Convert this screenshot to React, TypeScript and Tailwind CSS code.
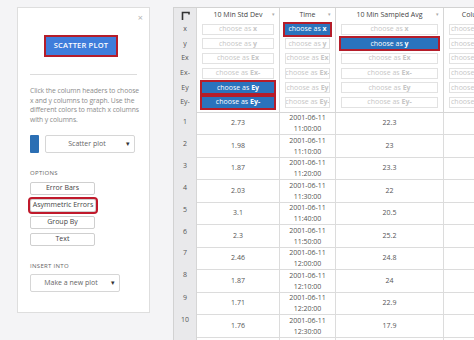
const rows = [
  ['2.73', '11:00:00', '22.3'],
  ['1.98', '11:10:00', '23'],
  ['1.87', '11:20:00', '23.3'],
  ['2.03', '11:30:00', '22'],
  ['3.1', '11:40:00', '20.5'],
  ['2.3', '11:50:00', '25.2'],
  ['2.46', '12:00:00', '24.8'],
  ['1.87', '12:10:00', '24'],
  ['1.71', '12:20:00', '22.9'],
  ['1.76', '12:30:00', '17.9'],
  ['', '', ''],
];

const roles = ['x', 'y', 'Ex', 'Ex-', 'Ey', 'Ey-'];

const columns = [
  { name: '10 Min Std Dev', w: 'w-[83px]', picked: ['Ey', 'Ey-'] },
  { name: 'Time', w: 'w-[56px]', picked: ['x'] },
  { name: '10 Min Sampled Avg', w: 'w-[108px]', picked: ['y'] },
  { name: 'Column 4', w: 'w-[68px]', picked: [] as string[] },
];

function ChooseBox({ role, picked, left }: { role: string; picked: boolean; left?: boolean }) {
  if (picked) {
    return (
      <div className="h-[11px] w-full bg-[#2a73bd] text-white outline-2 outline-[#b51d2a] flex items-center justify-center whitespace-nowrap overflow-hidden">
        choose as&nbsp;<b className="font-bold">{role}</b>
      </div>
    );
  }
  return (
    <div
      className={`h-[11px] w-full bg-white border border-[#e2e2e2] text-[#c6c6c6] flex items-center whitespace-nowrap overflow-hidden ${
        left ? 'justify-start pl-[1px]' : 'justify-center'
      }`}
    >
      choose as&nbsp;<b className="font-bold">{role}</b>
    </div>
  );
}

function Caret() {
  return <span className="text-[7px] text-[#333] leading-none">▾</span>;
}

function IndexCell({ children, className = '' }: { children?: React.ReactNode; className?: string }) {
  return (
    <div className={`w-[23px] shrink-0 self-stretch bg-[#e9e9eb] border-r border-[#d6d6d6] text-[#555] ${className}`}>
      {children}
    </div>
  );
}

export default function App() {
  return (
    <div className="w-[474px] h-[340px] bg-[#f4f4f6] overflow-hidden flex items-start font-['Open_Sans',sans-serif]">
      {/* side panel */}
      <div className="w-[173px] shrink-0 pl-[17px] pt-[7px]">
        <div className="relative w-[133px] h-[306px] bg-white border border-[#dedede] px-[12px]">
          <span className="absolute right-[6px] top-[3px] text-[9px] text-[#b5b5b5]">×</span>
          <div className="mt-[29px] ml-[16px] w-[70px] h-[18px] bg-[#3f7ddb] outline-2 outline-[#b51d2a] flex items-center justify-center text-white text-[7.5px] font-semibold tracking-[0.2px]">
            SCATTER PLOT
          </div>
          <div className="mt-[19px] border-t border-[#dcdcdc]" />
          <p className="mt-[11px] text-[6.8px] leading-[9.7px] tracking-[-0.1px] text-[#8c8c8c] w-[110px]">
            Click the column headers to choose x and y columns to graph. Use the different colors to match x columns with y columns.
          </p>
          <div className="mt-[10px] flex gap-[6px] h-[18px]">
            <div className="w-[9px] h-full bg-[#2b6fb4] rounded-[1px]" />
            <div className="w-[90px] h-full border border-[#d6d6d6] rounded-[2px] flex items-center text-[7px] text-[#666]">
              <span className="flex-1 text-center pl-[2px]">Scatter plot</span>
              <span className="pr-[4px]">
                <Caret />
              </span>
            </div>
          </div>
          <div className="mt-[16px] text-[6px] leading-[8px] text-[#666] tracking-[0.3px]">OPTIONS</div>
          <div className="mt-[5px] flex flex-col gap-[4px] text-[7px] text-[#444]">
            <div className="w-[65px] h-[13px] border border-[#cfcfcf] rounded-[2px] flex items-center justify-center">Error Bars</div>
            <div className="w-[66px] h-[13px] border border-[#cfcfcf] rounded-[2px] outline-2 outline-[#c0192b] flex items-center justify-center">
              Asymmetric Errors
            </div>
            <div className="w-[65px] h-[13px] border border-[#cfcfcf] rounded-[2px] flex items-center justify-center">Group By</div>
            <div className="w-[65px] h-[13px] border border-[#cfcfcf] rounded-[2px] flex items-center justify-center">Text</div>
          </div>
          <div className="mt-[16px] text-[6px] leading-[8px] text-[#666] tracking-[0.3px]">INSERT INTO</div>
          <div className="mt-[4px] w-[90px] h-[18px] border border-[#d6d6d6] rounded-[2px] flex items-center text-[7px] text-[#666]">
            <span className="flex-1 text-center">Make a new plot</span>
            <span className="pr-[4px]">
              <Caret />
            </span>
          </div>
        </div>
      </div>

      {/* grid */}
      <div className="mt-[7px] flex flex-col border-l border-t border-[#d2d2d2] bg-white text-[7px] leading-[10px] text-[#555] shrink-0">
        {/* header row */}
        <div className="flex h-[14px] shrink-0">
          <IndexCell className="flex items-center justify-center">
            <svg width="9" height="9" viewBox="0 0 9 9">
              <path d="M1.5 9V1.5H8V3.5" fill="none" stroke="#333" strokeWidth="1.6" />
            </svg>
          </IndexCell>
          {columns.map((col, ci) => (
            <div
              key={col.name}
              className={`${col.w} shrink-0 relative border-r border-[#d6d6d6] flex items-center justify-center text-[#444] whitespace-nowrap`}
            >
              {col.name}
              {ci < 3 && <span className="absolute right-[4px] top-[1px] text-[5px] text-[#aaa]">▾</span>}
            </div>
          ))}
        </div>

        {/* choose rows */}
        {roles.map((r) => (
          <div key={r} className="flex h-[14.6px] shrink-0">
            <IndexCell className="flex items-center justify-center">{r}</IndexCell>
            {columns.map((col, ci) => (
              <div key={col.name} className={`${col.w} shrink-0 border-r border-[#d6d6d6] px-[5px] flex items-center`}>
                <ChooseBox role={r} picked={col.picked.includes(r)} left={ci === 3} />
              </div>
            ))}
          </div>
        ))}
        <div className="flex h-[3px] shrink-0">
          <IndexCell />
          {columns.map((col) => (
            <div key={col.name} className={`${col.w} shrink-0 border-r border-b border-[#d6d6d6]`} />
          ))}
        </div>

        {/* data rows */}
        {rows.map((row, ri) => (
          <div key={ri} className="flex h-[22.5px] shrink-0">
            <IndexCell className="text-center">
              <div style={{ paddingTop: Math.max(0, 4.5 - ri * 0.6) }}>{ri + 1}</div>
            </IndexCell>
            {columns.map((col, ci) => (
              <div
                key={col.name}
                className={`${col.w} shrink-0 border-r border-b border-[#dcdcdc] flex items-center justify-center`}
              >
                {ci === 1
                  ? row[1] && (
                      <div className="leading-[11px] text-center">
                        2001-06-11
                        <br />
                        {row[1]}
                      </div>
                    )
                  : ci === 3
                    ? null
                    : <span>{ci === 0 ? row[0] : row[2]}</span>}
              </div>
            ))}
          </div>
        ))}
      </div>
    </div>
  );
}
